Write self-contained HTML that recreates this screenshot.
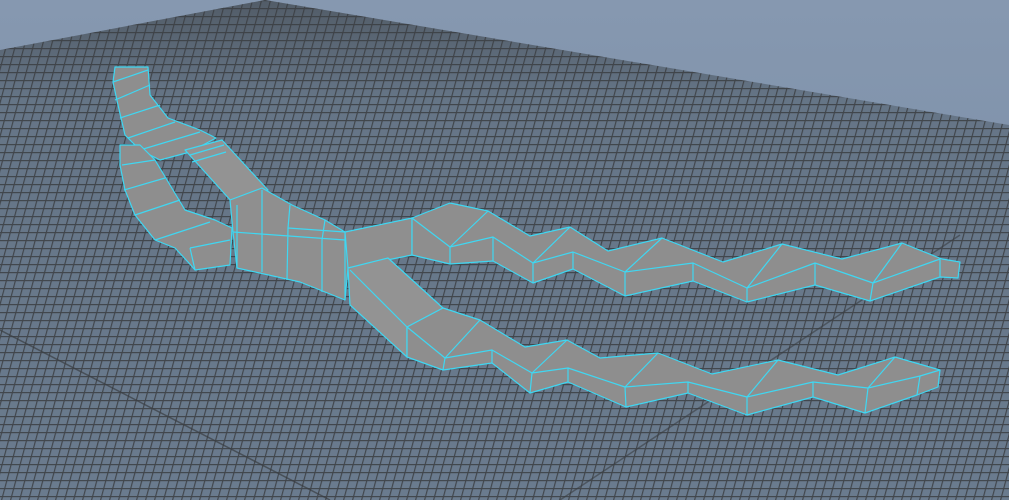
<!DOCTYPE html>
<html><head><meta charset="utf-8"><style>
html,body{margin:0;padding:0;width:1009px;height:500px;overflow:hidden;background:#8295ad}
svg{display:block}
</style></head><body>
<svg width="1009" height="500" viewBox="0 0 1009 500" xmlns="http://www.w3.org/2000/svg">
<defs>
<linearGradient id="sky" x1="0" y1="0" x2="0" y2="1"><stop offset="0" stop-color="#8698b0"/><stop offset="1" stop-color="#7589a2"/></linearGradient>
<pattern id="grid" width="9" height="8" patternUnits="userSpaceOnUse" patternTransform="skewX(-15)">
<rect width="9" height="8" fill="#6a7b8e"/>
<path d="M0 0.6H9M0.6 0V8" stroke="#41464c" stroke-width="1.2"/>
</pattern>
<linearGradient id="fade" x1="0" y1="0" x2="0" y2="1"><stop offset="0" stop-color="#3a3d41" stop-opacity="0.5"/><stop offset="0.2" stop-color="#3a3d41" stop-opacity="0.1"/><stop offset="1" stop-color="#3a3d41" stop-opacity="0"/></linearGradient>
</defs>
<rect width="1009" height="500" fill="url(#sky)"/>
<polygon points="0,50 265,0 1009,125 1009,500 0,500" fill="url(#grid)"/>
<polygon points="0,50 265,0 1009,125 1009,500 0,500" fill="url(#fade)"/>
<path d="M0,330 L330,500" stroke="#3a3e43" stroke-width="1.5" opacity="0.7"/>
<path d="M960,235 L560,500" stroke="#3a3e43" stroke-width="1.5" opacity="0.6"/>
<g fill="#8e8e8e" stroke="#3fd7f2" stroke-width="1.2" stroke-linejoin="round">
<polygon points="115,67 148,67 150,95 168,118 200,130 216,138 190,152 160,160 140,150 125,135 118,105 113,82"/>
<path d="M113,82 L148,70 M115,100 L150,85 M120,118 L160,105 M128,138 L175,122 M140,150 L200,132" fill="none"/>
<polygon points="120,145 140,145 155,160 170,185 185,210 215,220 232,228 230,265 195,270 188,262 175,248 155,240 135,215 125,190 120,165"/>
<path d="M122,165 L155,160 M124,190 L165,178 M135,215 L180,200 M155,240 L210,222 M190,248 L230,240 M195,270 L190,248" fill="none"/>
<polygon points="185,150 222,140 268,190 232,202" fill="#939393"/>
<path d="M190,155 L224,145 M192,162 L226,152" fill="none"/>
<polygon points="230,200 262,188 292,205 325,220 345,232 412,218 412,255 348,268 345,300 300,282 237,268 233,232" fill="#8f8f8f"/>
<path d="M237,205 L237,268 M262,190 L262,272 M290,205 L288,228 L287,280 M325,220 L322,240 L322,292 M345,232 L345,300 M233,232 L345,240 M288,228 L345,232 M348,268 L345,232" fill="none"/>
<polygon points="348,268 388,258 443,308 407,327 407,357 350,305" fill="#939393"/>
<path d="M350,270 L407,327" fill="none"/>
<polygon points="412,218 450,203 488,211 530,236 570,227 608,251 662,238 723,262 782,244 842,259 902,243 942,259 960,262 958,278 940,277 870,301 815,285 747,302 693,281 625,296 573,269 533,283 493,261 450,264 412,255"/>
<path d="M412,218 L450,247 L493,237 L533,263 L573,252 L625,272 L693,263 L747,288 L815,263 L873,283 L940,259 L940,277 M450,247 L450,264 M493,237 L493,261 M533,263 L533,283 M573,252 L573,269 M625,272 L625,296 M693,263 L693,281 M747,288 L747,302 M815,263 L815,285 M873,283 L870,301 M450,247 L488,211 M533,263 L570,227 M625,272 L662,238 M747,288 L782,244 M873,283 L902,243" fill="none"/>
<polygon points="407,327 443,308 480,320 525,347 567,340 600,358 658,353 712,374 778,360 838,375 895,357 940,370 938,387 917,395 865,413 813,397 747,415 688,393 626,407 568,382 530,393 492,363 443,370 407,357"/>
<path d="M407,327 L445,358 L492,350 L532,373 L568,368 L625,387 L688,382 L747,397 L813,382 L868,388 L920,376 L940,370 M445,358 L443,370 M492,350 L492,363 M532,373 L530,393 M568,368 L568,382 M625,387 L626,407 M688,382 L688,393 M747,397 L747,415 M813,382 L813,397 M868,388 L865,413 M920,376 L917,395 M445,358 L480,320 M532,373 L567,340 M625,387 L658,353 M747,397 L778,360 M868,388 L895,357" fill="none"/>
</g>
</svg>
</body></html>
